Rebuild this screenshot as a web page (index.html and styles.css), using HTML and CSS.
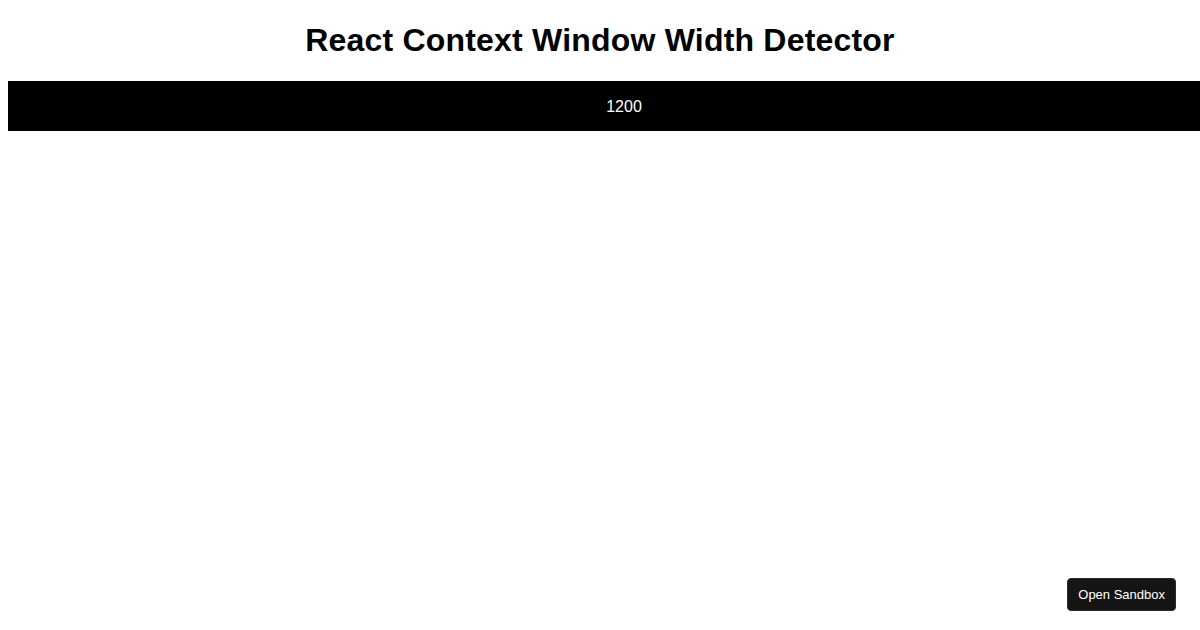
FILE: index.html
```html
<!DOCTYPE html>
<html>
<head>
<meta charset="utf-8">
<link rel="stylesheet" href="styles.css">
</head>
<body>
<h1 class="title">React Context Window Width Detector</h1>
<div class="bar">1200</div>
<a class="sandbox" href="#">Open Sandbox</a>
</body>
</html>
```
FILE: styles.css
```css
html, body {
  background: #fff;
}
body {
  margin: 0 0 0 8px;
  font-family: "Liberation Sans", Arial, sans-serif;
  overflow: hidden;
}
.title {
  margin: 0 8px 22px 0;
  padding-top: 22px;
  font-size: 32px;
  line-height: 37px;
  font-weight: bold;
  text-align: center;
  letter-spacing: 0.2px;
  color: #000;
}
.bar {
  height: 50px;
  line-height: 51px;
  background: #000;
  color: #fff;
  text-align: center;
  font-size: 16px;
  padding-left: 40px;
}
.sandbox {
  position: fixed;
  right: 24px;
  bottom: 19px;
  height: 33px;
  line-height: 32px;
  padding: 0 10px;
  background: #151515;
  color: #fff;
  border-radius: 4px;
  font-size: 13px;
  text-decoration: none;
  border: 1px solid #2a2a2a;
  box-sizing: border-box;
}
```
